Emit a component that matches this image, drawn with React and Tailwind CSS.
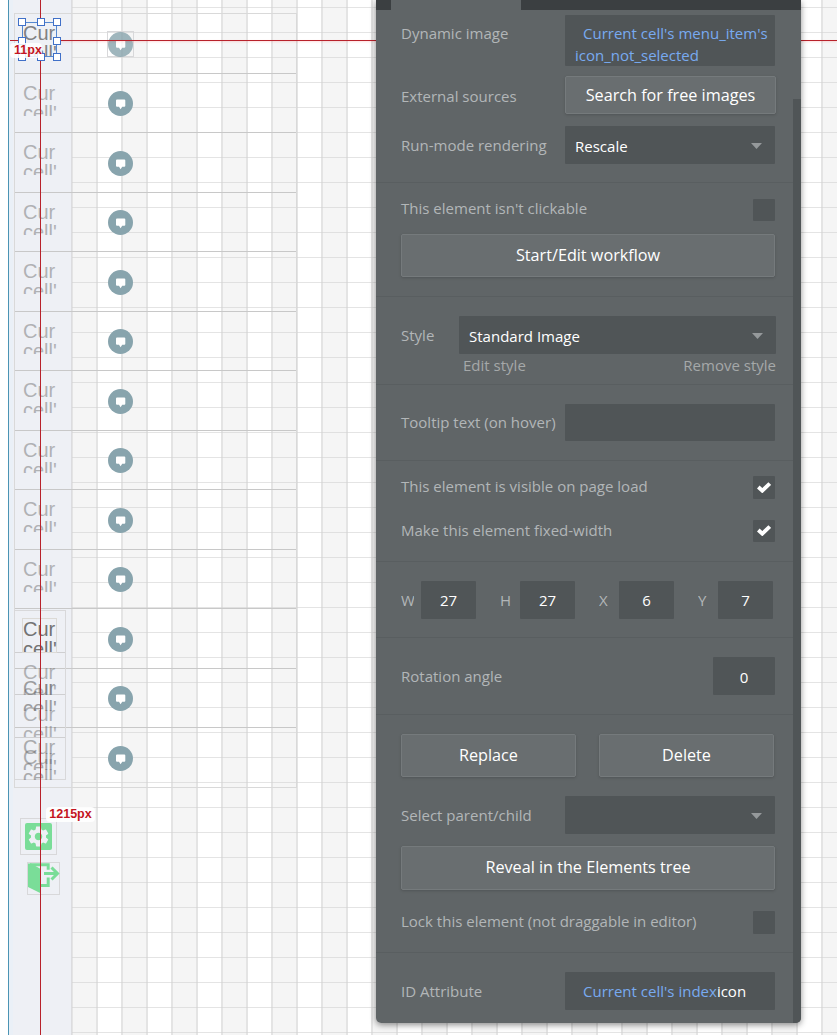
import React from "react";
import { MdSettings } from "react-icons/md";

const ROWS = Array.from({ length: 13 }, (_, i) => i);
const DIVIDERS = [73, 132, 192, 251, 311, 370, 430, 489, 549, 608, 668, 727];

function CellText({ top, className = "opacity-45" }) {
  return (
    <div
      className={`absolute left-[22px] h-[33px] w-[36px] overflow-hidden pl-px text-[20px] leading-[20px] text-[#666] ${className}`}
      style={{ top }}
    >
      Cur<br />cell'
    </div>
  );
}

function Bubble({ top, faded }) {
  return (
    <svg
      className={`absolute left-[108px] ${faded ? "opacity-80" : ""}`}
      style={{ top }}
      width="25"
      height="25"
      viewBox="0 0 25 25"
    >
      <circle cx="12.5" cy="12.5" r="12.5" fill="#88a4ad" />
      <path d="M9 8.500h7.300q1 0 1 1v5.200q0 1-1 1h-2.100l-1.600 2.600-1.600-2.600H9q-1 0-1-1V9.500q0-1 1-1z" fill="#fff" />
    </svg>
  );
}

function Handle({ x, y }) {
  return <div className="absolute size-[8px] border border-[#4070c8] bg-white" style={{ left: x, top: y }} />;
}

function Canvas() {
  return (
    <div className="absolute inset-0 overflow-hidden bg-white font-['Liberation_Sans',sans-serif]">
      <svg className="absolute inset-0" width="837" height="1035">
        <defs>
          <pattern id="cols" x="71" y="0" width="50" height="25" patternUnits="userSpaceOnUse">
            <rect width="27" height="25" fill="#f5f5f5" />
            <rect width="2" height="25" fill="#e4e4e4" />
            <rect x="25" width="2" height="25" fill="#e4e4e4" />
          </pattern>
          <pattern id="lines" x="0" y="7" width="25" height="25" patternUnits="userSpaceOnUse">
            <rect width="25" height="1" fill="#d2d2d2" fillOpacity="0.6" />
          </pattern>
        </defs>
        <rect x="71" width="766" height="1035" fill="url(#cols)" />
        <rect x="71" width="766" height="1035" fill="url(#lines)" />
        <rect x="9" width="62" height="1035" fill="#eef0f5" />
        <rect x="9" width="4" height="1035" fill="#eaf0f7" />
        <rect x="71" width="1" height="1035" fill="#dcdcdf" />
        <rect x="8" width="1" height="1035" fill="#4b94b4" />
        <rect x="14.500" y="13.500" width="282" height="774" fill="none" stroke="#d9d9d9" />
        {DIVIDERS.map((y) => (
          <rect key={y} x="15" y={y} width="281" height="1" fill="#c8c8c8" />
        ))}
        <g fill="none" stroke="#d8d8da">
          <rect x="14.500" y="610.500" width="51" height="169" />
          <path d="M15 652.500h50M15 694.500h50M15 737.500h50" stroke="#cfcfd1" />
          <rect x="22.500" y="618.500" width="34" height="34" stroke="#dcdad6" />
          <rect x="107.500" y="31.500" width="26" height="25" />
          <rect x="20.500" y="818.500" width="36" height="36" />
          <rect x="27.500" y="862.500" width="32" height="32" />
        </g>
        <rect x="25" y="823" width="27" height="27" rx="2" fill="#7add98" />
        <path d="M28 863.500h3l9.700 5.500v24.300L28 887z" fill="#7add98" />
        <g fill="none" stroke="#7add98" strokeWidth="3">
          <path d="M30 864.700h18.200v5M48.200 877.500v8H41" />
          <path d="M44 873.500h13" />
          <path d="M51.500 867.500l6 6-6 6" />
        </g>
      </svg>
      <MdSettings className="absolute left-[26px] top-[824px] size-[25px] text-[#eef0f5]" />

      {ROWS.map((i) => (
        <Bubble key={i} top={Math.floor(32 + i * 59.5)} faded={i === 0} />
      ))}
      <CellText top={23} className="opacity-80" />
      {ROWS.slice(1, 10).map((i) => (
        <CellText key={i} top={Math.floor(23.5 + i * 59.5)} />
      ))}
      <CellText top={619} className="opacity-90" />
      <CellText top={662} />
      <CellText top={678} className="opacity-60" />
      <CellText top={704} />
      <CellText top={737} className="opacity-50" />
      <CellText top={747} className="opacity-50" />

      <div className="absolute left-[22px] top-[22px] size-[35px] border border-[#5588cf]" />
      <div className="absolute left-[10px] top-[40px] h-px w-[8px] bg-[#b8222b]" />
      <div className="absolute left-[58px] top-[40px] h-px w-[779px] bg-[#b8222b] shadow-[0_1px_2px_#ff000030]" />
      <div className="absolute left-[40px] top-0 h-[18px] w-px bg-[#b8222b]" />
      <div className="absolute left-[40px] top-[58px] h-[977px] w-px bg-[#b8222b]" />
      {[18, 37, 53].map((y) =>
        [18, 37, 53].map((x) => (x === 37 && y === 37 ? null : <Handle key={`${x}-${y}`} x={x} y={y} />)),
      )}
      <div className="absolute left-[10px] top-[43px] flex h-[15px] w-[32px] items-center justify-center rounded-sm bg-white/85 pl-[4px] text-[12.500px] font-bold text-[#c41421]">
        11px
      </div>
      <div className="absolute left-[46px] top-[807px] flex h-[15px] w-[49px] items-center justify-center rounded-sm bg-white/90 text-[12.500px] font-bold text-[#c41421]">
        1215px
      </div>
    </div>
  );
}

function Section({ className = "", children }) {
  return <section className={`flex flex-col border-b border-[#595e60] pl-[25px] ${className}`}>{children}</section>;
}

function Row({ className = "", children }) {
  return <div className={`flex w-[374px] items-center justify-between ${className}`}>{children}</div>;
}

function Button({ className = "", children }) {
  return (
    <button
      className={`flex shrink-0 items-center justify-center rounded-[2px] border border-[#757a7c] bg-[#696e70] text-[16.200px] text-white shadow-[0_1px_3px_#0000002a] ${className}`}
    >
      {children}
    </button>
  );
}

function Select({ className = "", children }) {
  return (
    <div className={`flex h-[38px] shrink-0 items-center justify-between rounded-[1px] bg-[#505557] pl-[10px] pr-[13px] pt-px text-white ${className}`}>
      <span>{children}</span>
      <svg width="11" height="6" viewBox="0 0 11 6">
        <path d="M0 0h11L5.500 6z" fill="#95999b" />
      </svg>
    </div>
  );
}

function Checkbox({ checked, className = "h-[22px]" }) {
  return (
    <div className={`flex w-[22px] items-center justify-center rounded-[1px] bg-[#505557] ${className}`}>
      {checked && (
        <svg className="-mt-px" width="14" height="11" viewBox="0 0 14 11">
          <path d="M1.300 5l4 3.700L12.700 1.500" fill="none" stroke="#fff" strokeWidth="3.800" />
        </svg>
      )}
    </div>
  );
}

function NumberField({ label, value }) {
  return (
    <div className="flex w-[99px] shrink-0 items-center">
      <span className="w-[13px] overflow-hidden">{label}</span>
      <span className="ml-[7px] flex h-[38px] w-[55px] items-center justify-center rounded-[1px] bg-[#505557] text-white">
        {value}
      </span>
    </div>
  );
}

function Panel() {
  return (
    <div className="relative ml-[376px] flex h-[1023px] w-[425px] flex-col overflow-hidden rounded-b-[5px] bg-[#606567] font-['Open_Sans',sans-serif] text-[15.020px] leading-[22px] text-[#b2b6b8]">
      <div className="flex h-[10px] shrink-0 justify-between bg-[#3b3f41] pl-[15px]">
        <div className="w-[130px] bg-[#606567]" />
      </div>
      <div className="flex flex-1">
        <div className="flex w-[417px] flex-col">
          <Section className="h-[173px]">
            <Row className="mt-[5px] h-[51px]">
              <span className="-mt-[16px]">Dynamic image</span>
              <div className="h-[51px] w-[210px] rounded-[1px] bg-[#505557] pl-[10px] pt-[7px] text-[#78aaf0]">
                <span className="whitespace-nowrap pl-[8px]">Current cell's menu_item's</span>
                <br />
                icon_not_selected
              </div>
            </Row>
            <Row className="mt-[10px] h-[38px]">
              <span className="mt-[2px]">External sources</span>
              <Button className="-mr-px h-[38px] w-[211px]">Search for free images</Button>
            </Row>
            <Row className="mt-[12px] h-[38px]">
              <span>Run-mode rendering</span>
              <Select className="w-[210px]">Rescale</Select>
            </Row>
          </Section>
          <Section className="h-[114px]">
            <Row className="mt-[16px] h-[22px]">
              <span className="-mt-[4px]">This element isn't clickable</span>
              <Checkbox />
            </Row>
            <Button className="mt-[13px] h-[43px] w-[374px] pb-[2px]">Start/Edit workflow</Button>
          </Section>
          <Section className="h-[88px]">
            <Row className="mt-[19px] h-[38px]">
              <span>Style</span>
              <Select className="-mr-px w-[317px]">Standard Image</Select>
            </Row>
            <Row className="h-[22px] pl-[62px] text-[#a5a8a9]">
              <span>Edit style</span>
              <span className="-mr-px">Remove style</span>
            </Row>
          </Section>
          <Section className="h-[76px]">
            <Row className="mt-[19px] h-[37px]">
              <span className="-mt-[2px]">Tooltip text (on hover)</span>
              <div className="h-[37px] w-[210px] rounded-[1px] bg-[#505557]" />
            </Row>
          </Section>
          <Section className="h-[101px]">
            <Row className="mt-[15px] h-[23px]">
              <span className="-mt-[4px]">This element is visible on page load</span>
              <Checkbox checked className="h-[23px]" />
            </Row>
            <Row className="mt-[21px] h-[22px]">
              <span className="-mt-[2px]">Make this element fixed-width</span>
              <Checkbox checked />
            </Row>
          </Section>
          <Section className="h-[76px]">
            <div className="mt-[19px] flex h-[38px]">
              <NumberField label="W" value="27" />
              <NumberField label="H" value="27" />
              <NumberField label="X" value="6" />
              <NumberField label="Y" value="7" />
            </div>
          </Section>
          <Section className="h-[77px]">
            <Row className="mt-[19px] h-[38px]">
              <span>Rotation angle</span>
              <div className="flex h-[38px] w-[62px] items-center justify-center rounded-[1px] bg-[#505557] pt-[2px] text-white">
                0
              </div>
            </Row>
          </Section>
          <Section className="h-[238px]">
            <div className="mt-[19px] flex h-[43px] gap-[23px]">
              <Button className="w-[175px] pb-[2px]">Replace</Button>
              <Button className="w-[175px] pb-[2px]">Delete</Button>
            </div>
            <Row className="mt-[19px] h-[38px]">
              <span>Select parent/child</span>
              <Select className="w-[210px]" />
            </Row>
            <Button className="mt-[12px] h-[44px] w-[374px] pb-[2px]">Reveal in the Elements tree</Button>
            <Row className="mt-[21px] h-[23px]">
              <span className="-mt-[4px]">Lock this element (not draggable in editor)</span>
              <Checkbox className="h-[23px]" />
            </Row>
          </Section>
          <div className="flex flex-1 flex-col pl-[25px]">
            <Row className="mt-[19px] h-[38px]">
              <span>ID Attribute</span>
              <div className="flex h-[38px] w-[210px] items-center rounded-[1px] bg-[#505557] pl-[18px] text-white">
                <span className="text-[#78aaf0]">Current cell's index</span>icon
              </div>
            </Row>
          </div>
        </div>
        <div className="mt-[89px] w-[8px] bg-[#505557]" />
      </div>
    </div>
  );
}

export default function App() {
  return (
    <main className="relative h-[1035px] w-[837px] overflow-hidden">
      <Canvas />
      <div className="absolute left-[376px] top-0 h-[1023px] w-[425px] rounded-b-[5px] shadow-[0_2px_6px_#00000070]" />
      <Panel />
    </main>
  );
}
